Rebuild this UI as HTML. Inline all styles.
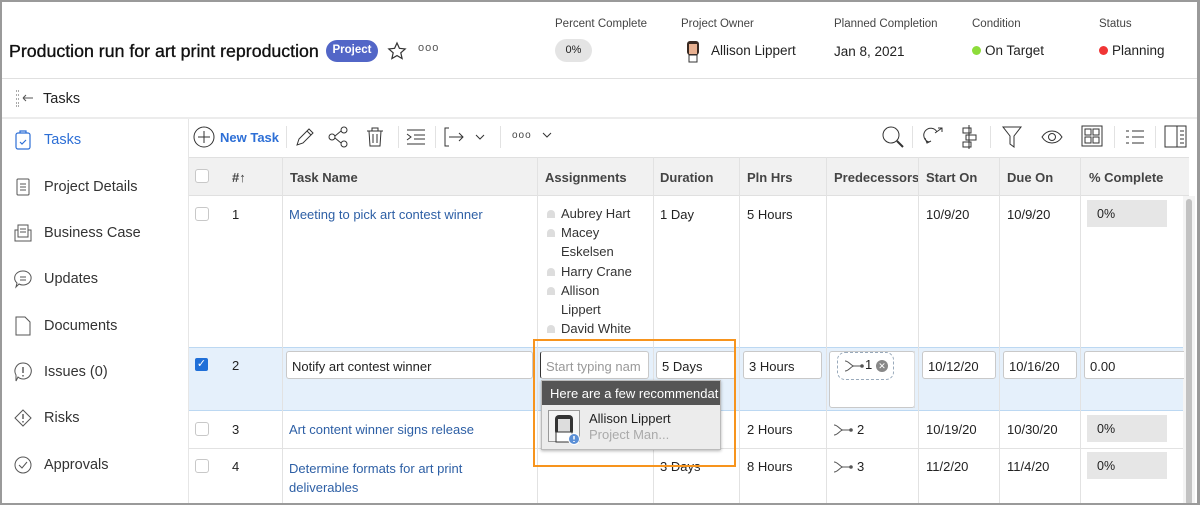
<!DOCTYPE html>
<html><head><meta charset="utf-8"><style>
*{box-sizing:border-box;margin:0;padding:0}
body{width:1200px;height:505px;overflow:hidden;background:#fff;font-family:"Liberation Sans",sans-serif;color:#222;position:relative}
.a{position:absolute;white-space:nowrap}
.lbl{font-size:11.5px;color:#444}
.t13{font-size:13px}
.vl{position:absolute;width:1px;background:#e2e2e2}
.hl{position:absolute;height:1px;background:#e2e2e2}
.link{color:#2d5fa5;font-size:13px}
.cb{position:absolute;width:14px;height:14px;border:1px solid #c8c8c8;border-radius:3px;background:#fff}
.inp{position:absolute;height:28px;border:1px solid #c9c9c9;border-radius:3px;background:#fff;font-size:13px;padding:7px 5px;white-space:nowrap;overflow:hidden}
.pct{position:absolute;width:80px;height:27px;background:#e6e6e6;font-size:12.5px;padding:7px 10px}
.nav{position:absolute;left:44px;font-size:14.5px;color:#333}
.ic{position:absolute}
.pers{display:inline-block;width:8px;height:8px;margin-right:6px;vertical-align:0}
.th{font-weight:bold;color:#444}
</style></head><body>
<div class="a" style="left:0;top:0;width:1200px;height:505px;border:2px solid #9a9a9a;border-right-width:3px;border-bottom-width:2px;z-index:50;pointer-events:none"></div>
<!-- header -->
<div class="a" style="left:9px;top:41px;font-size:17.75px;color:#111;-webkit-text-stroke:0.35px #111">Production run for art print reproduction</div>
<div class="a" style="left:326px;top:40px;width:52px;height:22px;border-radius:11px;background:#5266c7;color:#fff;font-size:11.5px;font-weight:bold;text-align:center;line-height:21px">Project</div>
<svg class="ic" style="left:387px;top:41px" width="20" height="20" viewBox="0 0 20 20"><path d="M10 2l2.4 5.3 5.8.6-4.4 3.9 1.3 5.7L10 14.6 4.9 17.5l1.3-5.7L1.8 7.9l5.8-.6z" fill="none" stroke="#333" stroke-width="1.2"/></svg>
<div class="a" style="left:418px;top:42px;font-size:11px;color:#555;letter-spacing:1px">ooo</div>
<div class="a lbl" style="left:555px;top:18px">Percent Complete</div>
<div class="a" style="left:555px;top:39px;width:37px;height:23px;border-radius:12px;background:#e4e4e4;font-size:11px;text-align:center;line-height:23px">0%</div>
<div class="a lbl" style="left:681px;top:18px">Project Owner</div>
<svg class="ic" style="left:684px;top:39px" width="18" height="24" viewBox="0 0 18 24"><rect x="3" y="2" width="12" height="14" rx="3" fill="#3a2a22"/><rect x="5" y="5" width="8" height="10" fill="#e8b090"/><rect x="5" y="16" width="8" height="7" fill="#fff" stroke="#333"/></svg>
<div class="a" style="left:711px;top:43px;font-size:13.5px">Allison Lippert</div>
<div class="a lbl" style="left:834px;top:18px">Planned Completion</div>
<div class="a" style="left:834px;top:44px;font-size:13.5px">Jan 8, 2021</div>
<div class="a lbl" style="left:972px;top:18px">Condition</div>
<div class="a" style="left:972px;top:43px;font-size:13.5px"><span style="display:inline-block;width:9px;height:9px;border-radius:50%;background:#8ddc3a;margin-right:4px"></span>On Target</div>
<div class="a lbl" style="left:1099px;top:18px">Status</div>
<div class="a" style="left:1099px;top:43px;font-size:13.5px"><span style="display:inline-block;width:9px;height:9px;border-radius:50%;background:#f03535;margin-right:4px"></span>Planning</div>
<div class="hl" style="left:0;top:78px;width:1200px;background:#e0e0e0"></div>
<!-- tasks bar -->
<svg class="ic" style="left:14px;top:89px" width="22" height="18" viewBox="0 0 22 18"><g stroke="#555" stroke-width="1"><path d="M2 2h3M2 6h3M2 10h3M2 14h3M2 17h3" stroke-dasharray="1 1"/><path d="M9 9h10M9 9l3-3M9 9l3 3"/></g></svg>
<div class="a" style="left:43px;top:91px;font-size:14.5px">Tasks</div>
<div class="hl" style="left:0;top:117px;width:1200px;height:2px;background:#ececec"></div>
<!-- sidebar -->
<div class="vl" style="left:188px;top:119px;height:386px;background:#e6e6e6"></div>
<svg class="ic" style="left:13px;top:129px" width="20" height="22" viewBox="0 0 20 22"><rect x="3" y="4" width="14" height="16" rx="2" fill="none" stroke="#2d6fd6" stroke-width="1.2"/><path d="M7 4V2h6v2M7 13l2 2 4-4" fill="none" stroke="#2d6fd6" stroke-width="1.2"/></svg>
<div class="nav" style="top:132px;color:#2d6fd6">Tasks</div>
<svg class="ic" style="left:15px;top:177px" width="16" height="20" viewBox="0 0 16 20"><rect x="2" y="2" width="12" height="16" rx="1" fill="none" stroke="#555"/><path d="M5 7h6M5 10h6M5 13h6" stroke="#555"/></svg>
<div class="nav" style="top:179px">Project Details</div>
<svg class="ic" style="left:13px;top:223px" width="20" height="20" viewBox="0 0 20 20"><rect x="2" y="7" width="16" height="11" fill="none" stroke="#555"/><rect x="5" y="2" width="10" height="12" fill="#fff" stroke="#555"/><path d="M7 6h6M7 9h6" stroke="#555"/></svg>
<div class="nav" style="top:225px">Business Case</div>
<svg class="ic" style="left:13px;top:269px" width="20" height="20" viewBox="0 0 20 20"><path d="M10 2a8 7 0 1 1-4 13l-3 3 1-4A8 7 0 0 1 10 2z" fill="none" stroke="#555"/><path d="M7 8h6M7 11h6" stroke="#555"/></svg>
<div class="nav" style="top:271px">Updates</div>
<svg class="ic" style="left:14px;top:315px" width="18" height="22" viewBox="0 0 18 22"><path d="M2 2h9l5 5v13H2z" fill="none" stroke="#555"/></svg>
<div class="nav" style="top:318px">Documents</div>
<svg class="ic" style="left:13px;top:361px" width="20" height="22" viewBox="0 0 20 22"><path d="M10 2a8 8 0 1 1-5 14l-2 4 0-6A8 8 0 0 1 10 2z" fill="none" stroke="#555"/><path d="M10 6v6M10 14v1.5" stroke="#555" stroke-width="1.4"/></svg>
<div class="nav" style="top:364px">Issues (0)</div>
<svg class="ic" style="left:13px;top:408px" width="20" height="20" viewBox="0 0 20 20"><path d="M10 2l8 8-8 8-8-8z" fill="none" stroke="#555"/><path d="M10 6v5M10 13v1.5" stroke="#555" stroke-width="1.4"/></svg>
<div class="nav" style="top:410px">Risks</div>
<svg class="ic" style="left:13px;top:455px" width="20" height="20" viewBox="0 0 20 20"><circle cx="10" cy="10" r="8" fill="none" stroke="#555"/><path d="M6 10l3 3 5-6" fill="none" stroke="#555"/></svg>
<div class="nav" style="top:457px">Approvals</div>
<!-- toolbar -->
<svg class="ic" style="left:193px;top:126px" width="22" height="22" viewBox="0 0 22 22"><circle cx="11" cy="11" r="10" fill="none" stroke="#333"/><path d="M11 5v12M5 11h12" stroke="#333"/></svg>
<div class="a" style="left:220px;top:130px;font-size:13px;color:#2d6fd6;font-weight:bold">New Task</div>
<div class="vl" style="left:286px;top:126px;height:22px"></div>
<svg class="ic" style="left:294px;top:126px" width="22" height="22" viewBox="0 0 22 22"><path d="M3 19l2-6L15 3l4 4L9 17z M13 5l4 4" fill="none" stroke="#333"/></svg>
<svg class="ic" style="left:327px;top:126px" width="22" height="22" viewBox="0 0 22 22"><circle cx="17" cy="4" r="3" fill="none" stroke="#333"/><circle cx="5" cy="11" r="3" fill="none" stroke="#333"/><circle cx="17" cy="18" r="3" fill="none" stroke="#333"/><path d="M8 10l6-5M8 12l6 5" stroke="#333"/></svg>
<svg class="ic" style="left:364px;top:126px" width="22" height="22" viewBox="0 0 22 22"><path d="M3 5h16M8 5V2h6v3M5 5l1 15h10l1-15M9 8v9M13 8v9" fill="none" stroke="#333"/></svg>
<div class="vl" style="left:398px;top:126px;height:22px"></div>
<svg class="ic" style="left:405px;top:127px" width="22" height="20" viewBox="0 0 22 20"><path d="M2 3h18M2 17h18M9 8h11M9 12h11M2 7l4 3-4 3" fill="none" stroke="#333"/></svg>
<div class="vl" style="left:435px;top:126px;height:22px"></div>
<svg class="ic" style="left:443px;top:126px" width="50" height="22" viewBox="0 0 50 22"><path d="M6 2H2v18h4M6 11h14M16 7l4 4-4 4M33 9l4 4 4-4" fill="none" stroke="#333"/></svg>
<div class="vl" style="left:500px;top:126px;height:22px"></div>
<div class="a" style="left:512px;top:130px;font-size:10px;color:#444;letter-spacing:1px">ooo</div>
<svg class="ic" style="left:540px;top:130px" width="14" height="12" viewBox="0 0 14 12"><path d="M3 3l4 4 4-4" fill="none" stroke="#333"/></svg>
<svg class="ic" style="left:880px;top:124px" width="26" height="26" viewBox="0 0 26 26"><circle cx="11" cy="11" r="8" fill="none" stroke="#333"/><path d="M17 17l6 6" stroke="#333" stroke-width="2"/></svg>
<div class="vl" style="left:912px;top:126px;height:22px"></div>
<svg class="ic" style="left:921px;top:124px" width="24" height="26" viewBox="0 0 24 26"><path d="M16 8a7 7 0 1 0-8 10M4 14l2 5 4-2M14 9l7-5M17 4h4v4" fill="none" stroke="#333"/></svg>
<svg class="ic" style="left:959px;top:124px" width="20" height="26" viewBox="0 0 20 26"><path d="M10 1v24M4 4h8v5H4zM7 11h10v5H7zM4 18h8v5H4z" fill="#fff" stroke="#333"/></svg>
<div class="vl" style="left:990px;top:126px;height:22px"></div>
<svg class="ic" style="left:1001px;top:125px" width="22" height="24" viewBox="0 0 22 24"><path d="M2 2h18l-7 9v11l-4-3v-8z" fill="none" stroke="#333"/></svg>
<svg class="ic" style="left:1040px;top:126px" width="24" height="22" viewBox="0 0 24 22"><path d="M2 11c5-8 15-8 20 0c-5 8-15 8-20 0z" fill="none" stroke="#333"/><circle cx="12" cy="11" r="3.5" fill="none" stroke="#333"/></svg>
<svg class="ic" style="left:1081px;top:125px" width="22" height="22" viewBox="0 0 22 22"><rect x="1" y="1" width="20" height="20" fill="none" stroke="#333"/><rect x="4" y="4" width="6" height="6" fill="none" stroke="#333"/><rect x="12" y="4" width="6" height="6" fill="none" stroke="#333"/><rect x="4" y="12" width="6" height="6" fill="none" stroke="#333"/><rect x="12" y="12" width="6" height="6" fill="none" stroke="#333"/></svg>
<div class="vl" style="left:1114px;top:126px;height:22px"></div>
<svg class="ic" style="left:1124px;top:128px" width="22" height="18" viewBox="0 0 22 18"><path d="M2 3h3M8 3h12M2 9h3M8 9h12M2 15h3M8 15h12" stroke="#333"/></svg>
<div class="vl" style="left:1155px;top:126px;height:22px"></div>
<svg class="ic" style="left:1164px;top:125px" width="24" height="24" viewBox="0 0 24 24"><rect x="1" y="1" width="21" height="21" fill="none" stroke="#333"/><path d="M13 1v21M16 6h4M16 10h4M16 14h4M16 18h4" stroke="#333"/></svg>
<!-- table header -->
<div class="a" style="left:189px;top:157px;width:1000px;height:39px;background:#f1f1f1;border-top:1px solid #e0e0e0;border-bottom:1px solid #e0e0e0"></div>
<div class="cb" style="left:195px;top:169px"></div>
<div class="a t13 th" style="left:232px;top:170px">#&#8593;</div>
<div class="a t13 th" style="left:290px;top:170px">Task Name</div>
<div class="a t13 th" style="left:545px;top:170px">Assignments</div>
<div class="a t13 th" style="left:660px;top:170px">Duration</div>
<div class="a t13 th" style="left:747px;top:170px">Pln Hrs</div>
<div class="a t13 th" style="left:834px;top:170px">Predecessors</div>
<div class="a t13 th" style="left:926px;top:170px">Start On</div>
<div class="a t13 th" style="left:1007px;top:170px">Due On</div>
<div class="a t13 th" style="left:1089px;top:170px">% Complete</div>
<!-- row 2 bg -->
<div class="a" style="left:189px;top:347px;width:994px;height:64px;background:#e5f0fb;border-top:1px solid #bcd8f2;border-bottom:1px solid #bcd8f2"></div>
<!-- column lines -->
<div class="vl" style="left:282px;top:157px;height:348px"></div>
<div class="vl" style="left:537px;top:157px;height:348px"></div>
<div class="vl" style="left:653px;top:157px;height:348px"></div>
<div class="vl" style="left:739px;top:157px;height:348px"></div>
<div class="vl" style="left:826px;top:157px;height:348px"></div>
<div class="vl" style="left:918px;top:157px;height:348px"></div>
<div class="vl" style="left:999px;top:157px;height:348px"></div>
<div class="vl" style="left:1080px;top:157px;height:348px"></div>
<div class="hl" style="left:189px;top:448px;width:994px"></div>
<!-- scrollbar -->
<div class="a" style="left:1183px;top:196px;width:12px;height:309px;background:#f4f4f4"></div>
<div class="a" style="left:1186px;top:199px;width:6px;height:306px;background:#c2c2c2;border-radius:3px"></div>
<!-- row1 -->
<div class="cb" style="left:195px;top:207px"></div>
<div class="a t13" style="left:232px;top:207px">1</div>
<div class="a link" style="left:289px;top:207px">Meeting to pick art contest winner</div>
<div class="a t13" style="left:547px;top:204px;line-height:19.2px;color:#333">
<div><span class="pers" style="background:#ddd;border-radius:4px 4px 0 0"></span>Aubrey Hart</div>
<div><span class="pers" style="background:#ddd;border-radius:4px 4px 0 0"></span>Macey</div>
<div style="padding-left:14px">Eskelsen</div>
<div><span class="pers" style="background:#ddd;border-radius:4px 4px 0 0"></span>Harry Crane</div>
<div><span class="pers" style="background:#ddd;border-radius:4px 4px 0 0"></span>Allison</div>
<div style="padding-left:14px">Lippert</div>
<div><span class="pers" style="background:#ddd;border-radius:4px 4px 0 0"></span>David White</div>
</div>
<div class="a t13" style="left:660px;top:207px">1 Day</div>
<div class="a t13" style="left:747px;top:207px">5 Hours</div>
<div class="a t13" style="left:926px;top:207px">10/9/20</div>
<div class="a t13" style="left:1007px;top:207px">10/9/20</div>
<div class="pct" style="left:1087px;top:200px">0%</div>
<!-- row2 -->
<div class="a" style="left:195px;top:358px;width:13px;height:13px;background:#1f6fd8;border-radius:2px;color:#fff;font-size:11px;line-height:13px;text-align:center">&#10003;</div>
<div class="a t13" style="left:232px;top:358px">2</div>
<div class="inp" style="left:286px;top:351px;width:247px">Notify art contest winner</div>
<div class="inp" style="left:540px;top:351px;width:109px;color:#999;border-left:1px solid #333">Start typing nam</div>
<div class="inp" style="left:656px;top:351px;width:80px">5 Days</div>
<div class="inp" style="left:743px;top:351px;width:79px">3 Hours</div>
<div class="a" style="left:829px;top:351px;width:86px;height:57px;border:1px solid #c9c9c9;border-radius:3px;background:#fff"></div>
<div class="a" style="left:837px;top:352px;width:57px;height:28px;border:1px dashed #9ab;border-radius:8px"></div>
<svg class="ic" style="left:844px;top:359px" width="22" height="14" viewBox="0 0 22 14"><path d="M1 2c4 0 6 5 9 5M1 12c4 0 6-5 9-5h8" fill="none" stroke="#555"/><circle cx="18" cy="7" r="1.8" fill="#555"/></svg>
<div class="a t13" style="left:865px;top:357px">1</div>
<div class="a" style="left:876px;top:360px;width:12px;height:12px;border-radius:50%;background:#888;color:#fff;font-size:9px;text-align:center;line-height:12px">&#10005;</div>
<div class="a" style="left:914px;top:351px;width:1px;height:57px;background:#ddd"></div>
<div class="inp" style="left:922px;top:351px;width:74px">10/12/20</div>
<div class="inp" style="left:1003px;top:351px;width:74px">10/16/20</div>
<div class="inp" style="left:1084px;top:351px;width:100px;border-right:none;border-radius:3px 0 0 3px">0.00</div>
<!-- dropdown -->
<div class="a" style="left:541px;top:380px;width:180px;height:70px;background:#ececec;border:1px solid #bbb;box-shadow:0 1px 3px rgba(0,0,0,.3);overflow:hidden">
<div style="height:24px;background:#555;color:#fff;font-size:13px;padding:5px 8px;white-space:nowrap">Here are a few recommendat</div>
<svg style="position:absolute;left:6px;top:29px" width="34" height="36" viewBox="0 0 34 36"><rect x="0.5" y="0.5" width="31" height="31" fill="#f4f4f4" stroke="#999"/><rect x="7" y="5" width="18" height="20" rx="4" fill="#333"/><rect x="10" y="9" width="12" height="13" fill="#ddd"/><rect x="8" y="22" width="16" height="10" fill="#fff" stroke="#333"/><circle cx="26" cy="29" r="5.5" fill="#5b8fd6" stroke="#fff"/><path d="M26 26v3.5M26 31v1" stroke="#fff" stroke-width="1.5"/></svg>
<div style="position:absolute;left:47px;top:30px;font-size:13px;color:#222">Allison Lippert</div>
<div style="position:absolute;left:47px;top:46px;font-size:13px;color:#aaa">Project Man...</div>
</div>
<!-- orange highlight -->
<div class="a" style="left:533px;top:339px;width:203px;height:128px;border:2px solid #f7941d;z-index:40"></div>
<!-- row3 -->
<div class="cb" style="left:195px;top:422px"></div>
<div class="a t13" style="left:232px;top:422px">3</div>
<div class="a link" style="left:289px;top:422px">Art content winner signs release</div>
<div class="a t13" style="left:747px;top:422px">2 Hours</div>
<svg class="ic" style="left:833px;top:423px" width="22" height="14" viewBox="0 0 22 14"><path d="M1 2c4 0 6 5 9 5M1 12c4 0 6-5 9-5h8" fill="none" stroke="#555"/><circle cx="18" cy="7" r="1.8" fill="#555"/></svg>
<div class="a t13" style="left:857px;top:422px">2</div>
<div class="a t13" style="left:926px;top:422px">10/19/20</div>
<div class="a t13" style="left:1007px;top:422px">10/30/20</div>
<div class="pct" style="left:1087px;top:415px">0%</div>
<!-- row4 -->
<div class="cb" style="left:195px;top:459px"></div>
<div class="a t13" style="left:232px;top:459px">4</div>
<div class="a link" style="left:289px;top:459px;line-height:19px">Determine formats for art print<br>deliverables</div>
<div class="a t13" style="left:660px;top:459px">3 Days</div>
<div class="a t13" style="left:747px;top:459px">8 Hours</div>
<svg class="ic" style="left:833px;top:460px" width="22" height="14" viewBox="0 0 22 14"><path d="M1 2c4 0 6 5 9 5M1 12c4 0 6-5 9-5h8" fill="none" stroke="#555"/><circle cx="18" cy="7" r="1.8" fill="#555"/></svg>
<div class="a t13" style="left:857px;top:459px">3</div>
<div class="a t13" style="left:926px;top:459px">11/2/20</div>
<div class="a t13" style="left:1007px;top:459px">11/4/20</div>
<div class="pct" style="left:1087px;top:452px">0%</div>
</body></html>
